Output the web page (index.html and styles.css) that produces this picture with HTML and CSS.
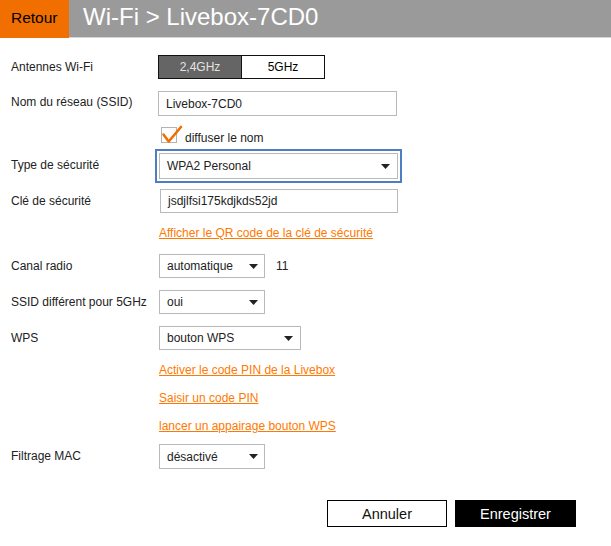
FILE: index.html
```html
<!DOCTYPE html>
<html lang="fr">
<head>
<meta charset="utf-8">
<title>Wi-Fi &gt; Livebox-7CD0</title>
<link rel="stylesheet" href="styles.css">
</head>
<body>
<header class="topbar">
  <div class="back">Retour</div>
  <h1 class="title">Wi-Fi &gt; Livebox-7CD0</h1>
</header>
<main class="form">
  <div class="row r-antennas">
    <div class="label">Antennes Wi-Fi</div>
    <div class="toggle">
      <span class="seg seg-on">2,4GHz</span>
      <span class="seg">5GHz</span>
    </div>
  </div>
  <div class="row r-ssid">
    <div class="label label-tight">Nom du réseau (SSID)</div>
    <div class="input input-wide">Livebox-7CD0</div>
  </div>
  <div class="row r-check">
    <div class="label"></div>
    <span class="checkbox">
      <svg class="checkmark" width="24" height="22" viewBox="0 0 24 22"><polyline points="3.5,10.5 8.7,17.5 21,3" fill="none" stroke="#f16e00" stroke-width="2.6" stroke-linecap="round" stroke-linejoin="round"/></svg>
    </span>
    <span class="check-text">diffuser le nom</span>
  </div>
  <div class="row r-security">
    <div class="label">Type de sécurité</div>
    <div class="select select-wide focused"><span>WPA2 Personal</span><svg class="caret" width="9" height="5" viewBox="0 0 9 5"><polygon points="0,0 9,0 4.5,5" fill="#222"/></svg></div>
  </div>
  <div class="row r-key">
    <div class="label">Clé de sécurité</div>
    <div class="input input-wide input-short">jsdjlfsi175kdjkds52jd</div>
  </div>
  <div class="row r-link1">
    <div class="label"></div>
    <a class="link" href="#">Afficher le QR code de la clé de sécurité</a>
  </div>
  <div class="row r-canal">
    <div class="label">Canal radio</div>
    <div class="select select-sm"><span>automatique</span><svg class="caret" width="9" height="5" viewBox="0 0 9 5"><polygon points="0,0 9,0 4.5,5" fill="#222"/></svg></div>
    <span class="channel">11</span>
  </div>
  <div class="row r-ssid5">
    <div class="label">SSID différent pour 5GHz</div>
    <div class="select select-sm"><span>oui</span><svg class="caret" width="9" height="5" viewBox="0 0 9 5"><polygon points="0,0 9,0 4.5,5" fill="#222"/></svg></div>
  </div>
  <div class="row r-wps">
    <div class="label">WPS</div>
    <div class="select select-md"><span>bouton WPS</span><svg class="caret" width="9" height="5" viewBox="0 0 9 5"><polygon points="0,0 9,0 4.5,5" fill="#222"/></svg></div>
  </div>
  <div class="row r-link2">
    <div class="label"></div>
    <a class="link" href="#">Activer le code PIN de la Livebox</a>
  </div>
  <div class="row r-link3">
    <div class="label"></div>
    <a class="link" href="#">Saisir un code PIN</a>
  </div>
  <div class="row r-link4">
    <div class="label"></div>
    <a class="link" href="#">lancer un appairage bouton WPS</a>
  </div>
  <div class="row r-mac">
    <div class="label">Filtrage MAC</div>
    <div class="select select-sm select-tall"><span>désactivé</span><svg class="caret" width="9" height="5" viewBox="0 0 9 5"><polygon points="0,0 9,0 4.5,5" fill="#222"/></svg></div>
  </div>
  <div class="actions">
    <button class="btn btn-cancel" type="button">Annuler</button>
    <button class="btn btn-save" type="button">Enregistrer</button>
  </div>
</main>
</body>
</html>
```
FILE: styles.css
```css
html, body {
  margin: 0;
  padding: 0;
  background: #fff;
}
body {
  font-family: "Liberation Sans", Arial, sans-serif;
  font-size: 12px;
  color: #222;
  width: 611px;
  height: 546px;
  overflow: hidden;
}

/* header */
.topbar {
  display: flex;
  height: 38px;
  background: #9a9a9a;
}
.back {
  width: 69px;
  box-sizing: border-box;
  background: #f16e00;
  color: #000;
  font-size: 15.5px;
  line-height: 1;
  padding: 0 0 2px 11px;
  display: flex;
  align-items: center;
}
.title {
  flex: 1;
  margin: 0;
  font-weight: normal;
  font-size: 24px;
  line-height: 1;
  color: #fff;
  padding: 0 0 4px 14px;
  display: flex;
  align-items: center;
  border-bottom: 1px solid #d4d4d4;
}

/* form */
.form {
  padding-left: 11px;
}
.row {
  display: flex;
  align-items: flex-start;
}
.label {
  width: 148px;
  flex: none;
  line-height: 14px;
  padding-top: 5px;
  color: #222;
}
.label-tight { padding-top: 4px; }

.r-antennas { margin-top: 17px; }
.r-ssid { margin-top: 12px; }
.r-check { margin-top: 11px; height: 16px; }
.r-security { margin-top: 10px; }
.r-key { margin-top: 10px; }
.r-link1 { margin-top: 13px; }
.r-canal { margin-top: 14px; }
.r-ssid5 { margin-top: 12px; }
.r-wps { margin-top: 12px; }
.r-link2 { margin-top: 13px; }
.r-link3 { margin-top: 14px; }
.r-link4 { margin-top: 14px; }
.r-mac { margin-top: 11px; }

/* toggle */
.toggle {
  display: flex;
  height: 24px;
  width: 167px;
  box-sizing: border-box;
  border: 1px solid #111;
  margin-left: -1px;
}
.seg {
  flex: 1;
  display: flex;
  align-items: center;
  justify-content: center;
  background: #fff;
  color: #000;
  font-size: 12px;
}
.seg-on {
  background: #656565;
  color: #e4e4e4;
  border-right: 1px solid #111;
}

/* inputs */
.input {
  box-sizing: border-box;
  height: 25px;
  border: 1px solid #b9b9b9;
  padding-left: 7px;
  display: flex;
  align-items: center;
  color: #222;
  background: #fff;
}
.input-wide { width: 239px; margin-left: -1px; }
.input-short { height: 24px; margin-left: 1px; width: 238px; }

/* checkbox */
.checkbox {
  position: relative;
  width: 16px;
  height: 16px;
  box-sizing: border-box;
  border: 1px solid #b3b3b3;
  margin-left: 2px;
  flex: none;
}
.checkmark {
  position: absolute;
  left: -2px;
  top: -4px;
}
.check-text {
  margin-left: 8px;
  line-height: 10px;
  padding-top: 6px;
}

/* selects */
.select {
  box-sizing: border-box;
  height: 24px;
  border: 1px solid #b9b9b9;
  background: #fff;
  display: flex;
  align-items: center;
  justify-content: space-between;
  padding: 0 7px 0 7px;
  color: #222;
}
.select-wide {
  width: 239px;
  height: 26px;
}
.select-sm { width: 106px; padding-right: 6px; }
.select-md { width: 142px; }
.select-tall { height: 25px; }
.focused {
  outline: 2px solid #4d7ec3;
  outline-offset: 2px;
}
.caret { flex: none; }
.channel {
  margin-left: 11px;
  line-height: 14px;
  padding-top: 5px;
  color: #222;
}

/* links */
.link {
  color: #ff7900;
  text-decoration: underline;
  line-height: 14px;
  font-size: 12px;
}

/* actions */
.actions {
  display: flex;
  justify-content: flex-end;
  gap: 8px;
  margin-top: 31px;
  padding-right: 35px;
}
.btn {
  font-family: "Liberation Sans", Arial, sans-serif;
  font-size: 14.5px;
  height: 27px;
  width: 121px;
  box-sizing: border-box;
  border: 1px solid #000;
  padding: 0;
  cursor: pointer;
}
.btn-cancel {
  background: #fff;
  color: #111;
  width: 120px;
}
.btn-save {
  background: #000;
  color: #fff;
}
```
